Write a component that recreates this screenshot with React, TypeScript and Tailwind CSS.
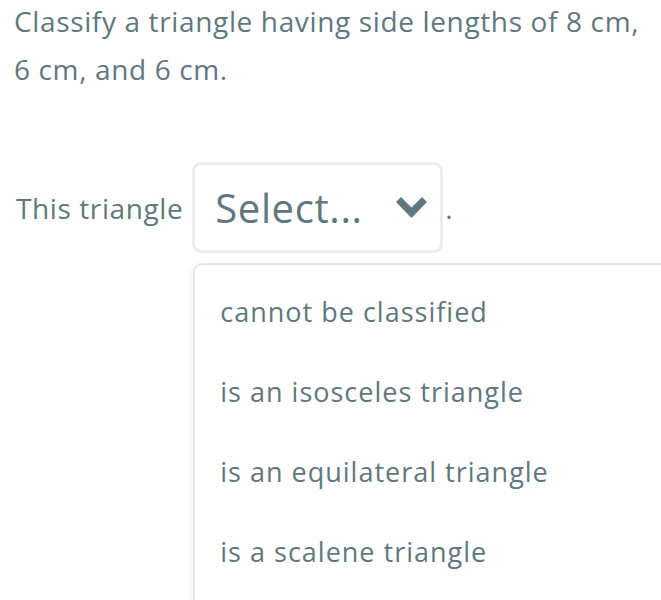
const options = [
  'cannot be classified',
  'is an isosceles triangle',
  'is an equilateral triangle',
  'is a scalene triangle',
];

function Chevron() {
  return (
    <svg width="31" height="21" viewBox="0 0 31 21" className="fill-[#5f7880]">
      <path d="M0 5 L5 0 L15.5 10.5 L26 0 L31 5 L15.5 21 Z" />
    </svg>
  );
}

export default function App() {
  return (
    <div
      className="relative h-[600px] w-[661px] overflow-hidden bg-white text-[#5f7880]"
      style={{ fontFamily: '"Open Sans", "Noto Sans", sans-serif' }}
    >
      <p className="-mt-[3px] px-[14px] text-[28px] leading-[48px] tracking-[0.64px]">
        Classify a triangle having side lengths of 8 cm,
        <br />6 cm, and 6 cm.
      </p>

      <div className="mt-[69px] flex items-center pl-[16px] text-[28px] tracking-[0.6px]">
        <span>This triangle</span>
        <div className="relative ml-[9px]">
          <div className="flex h-[91px] w-[251px] items-center justify-between rounded-[9px] border-[3px] border-[#ececec] pl-[20px] pr-[13px]">
            <span className="text-[40px] tracking-[0.6px]">Select...</span>
            <Chevron />
          </div>
          <div className="absolute left-[1px] top-[101px] w-[520px] rounded-[9px] border-2 border-[#e6e6e6] bg-white pt-[7px] shadow-[-2px_2px_6px_rgba(0,0,0,0.06)]">
            <ul className="h-[400px]">
              {options.map((o) => (
                <li key={o} className="flex h-[80px] items-center pl-[25px] text-[27px] tracking-[1px]">
                  {o}
                </li>
              ))}
            </ul>
          </div>
        </div>
        <span className="ml-[2px]">.</span>
      </div>
    </div>
  );
}
